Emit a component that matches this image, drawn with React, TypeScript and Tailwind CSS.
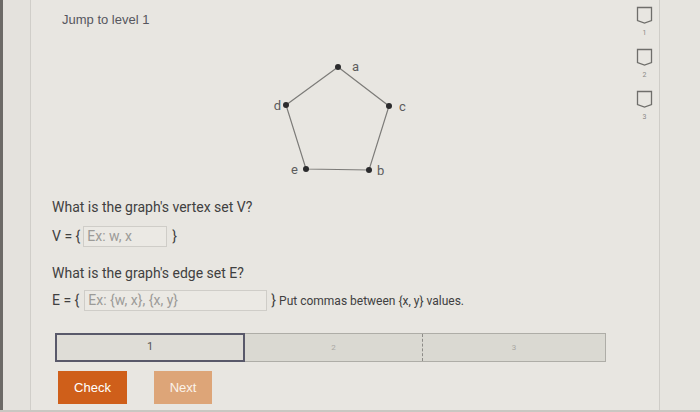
import React from "react";

const vertices = [
  { id: "a", x: 68, y: 12, lx: 82, ly: 16, anchor: "start" },
  { id: "c", x: 119, y: 51, lx: 129, ly: 56, anchor: "start" },
  { id: "b", x: 99, y: 115, lx: 107, ly: 120, anchor: "start" },
  { id: "e", x: 36, y: 114, lx: 28, ly: 119, anchor: "end" },
  { id: "d", x: 16, y: 50, lx: 11, ly: 55, anchor: "end" },
];

const Graph = () => (
  <svg width="140" height="130" viewBox="0 0 140 130" className="ml-[218px] mt-[26px] block">
    <polygon
      points={vertices.map((v) => `${v.x},${v.y}`).join(" ")}
      fill="none"
      stroke="#7c7b78"
      strokeWidth="1.2"
    />
    {vertices.map((v) => (
      <g key={v.id}>
        <circle cx={v.x} cy={v.y} r="3" fill="#2b2b2d" />
        <text
          x={v.lx}
          y={v.ly}
          textAnchor={v.anchor as "start" | "end"}
          fontSize="13"
          fill="#5c5c5c"
          fontFamily="Roboto, sans-serif"
        >
          {v.id}
        </text>
      </g>
    ))}
  </svg>
);

const Shield = ({ n }: { n: number }) => (
  <div className="flex flex-col items-center">
    <svg width="17" height="19" viewBox="0 0 17 19">
      <path d="M1.5 1.5 H15.5 V14.5 L8.5 17 L1.5 14.5 Z" fill="none" stroke="#6f6e6b" strokeWidth="1.3" />
    </svg>
    <span className="mt-[4px] text-[7px] leading-[8px] text-[#8a8986] font-['Roboto',sans-serif]">{n}</span>
  </div>
);

const App = () => {
  return (
    <div className="w-[700px] h-[412px] bg-[#e8e6e1] flex overflow-hidden border-b-2 border-[#c9c7c2]">
      {/* left bezel */}
      <div className="w-[3px] bg-[#6c6a67]" />
      <div className="w-[28px] bg-[#e4e2dd] border-r border-[#d0cec9]" />

      {/* main activity */}
      <div className="flex-1 pl-[21px] pt-[11px] text-[#404040] font-['Roboto',sans-serif]">
        <div className="ml-[10px] text-[13px] leading-[18px] text-[#56565e] font-['Liberation_Sans',sans-serif]">
          Jump to level 1
        </div>

        <Graph />

        <div className="mt-[12px] text-[14px] leading-[20px]">What is the graph's vertex set V?</div>
        <div className="mt-[9px] flex items-center h-[21px] text-[14px]">
          <span>V = {"{"}</span>
          <div className="ml-[3px] w-[84px] h-[21px] border border-[#cfcdc8] bg-[#ebe9e4] flex items-center px-[3px] text-[14px] text-[#9c9b98]">
            Ex: w, x
          </div>
          <span className="ml-[5px]">{"}"}</span>
        </div>

        <div className="mt-[16px] text-[14px] leading-[20px]">What is the graph's edge set E?</div>
        <div className="mt-[7px] flex items-center h-[21px] text-[14px]">
          <span>E = {"{"}</span>
          <div className="ml-[5px] w-[183px] h-[21px] border border-[#cfcdc8] bg-[#ebe9e4] flex items-center px-[3px] text-[14px] text-[#9c9b98]">
            Ex: {"{"}w, x{"}"}, {"{"}x, y{"}"}
          </div>
          <span className="ml-[4px]">{"}"}</span>
          <span className="ml-[3px] text-[12px] text-[#404040]">Put commas between {"{"}x, y{"}"} values.</span>
        </div>

        {/* progress */}
        <div className="mt-[22px] ml-[3px] w-[551px] h-[29px] flex">
          <div className="w-[190px] border-2 border-[#59596a] bg-[#dfddd7] flex items-center justify-center text-[11px] text-[#555]">
            1
          </div>
          <div className="flex-1 flex border-y border-r border-[#aeada7] bg-[#dad9d2]">
            <div className="w-[178px] border-r border-dashed border-[#8d8c88] flex items-center justify-center text-[8px] text-[#a9a8a3]">
              2
            </div>
            <div className="flex-1 flex items-center justify-center text-[8px] text-[#a9a8a3]">3</div>
          </div>
        </div>

        <div className="mt-[9px] ml-[6px] flex gap-[27px] font-['Liberation_Sans',sans-serif] text-[13px] text-white">
          <button className="w-[69px] h-[33px] bg-[#cf5f1a]">Check</button>
          <button className="w-[58px] h-[33px] bg-[#dda578] text-[#fbf3ea]">Next</button>
        </div>
      </div>

      {/* level sidebar */}
      <div className="w-[30px] pt-[6px] flex flex-col items-center gap-[11px] border-r border-[#cfcdc8]">
        <Shield n={1} />
        <Shield n={2} />
        <Shield n={3} />
      </div>
      <div className="w-[40px] bg-[#e6e4df]" />
    </div>
  );
};

export default App;
